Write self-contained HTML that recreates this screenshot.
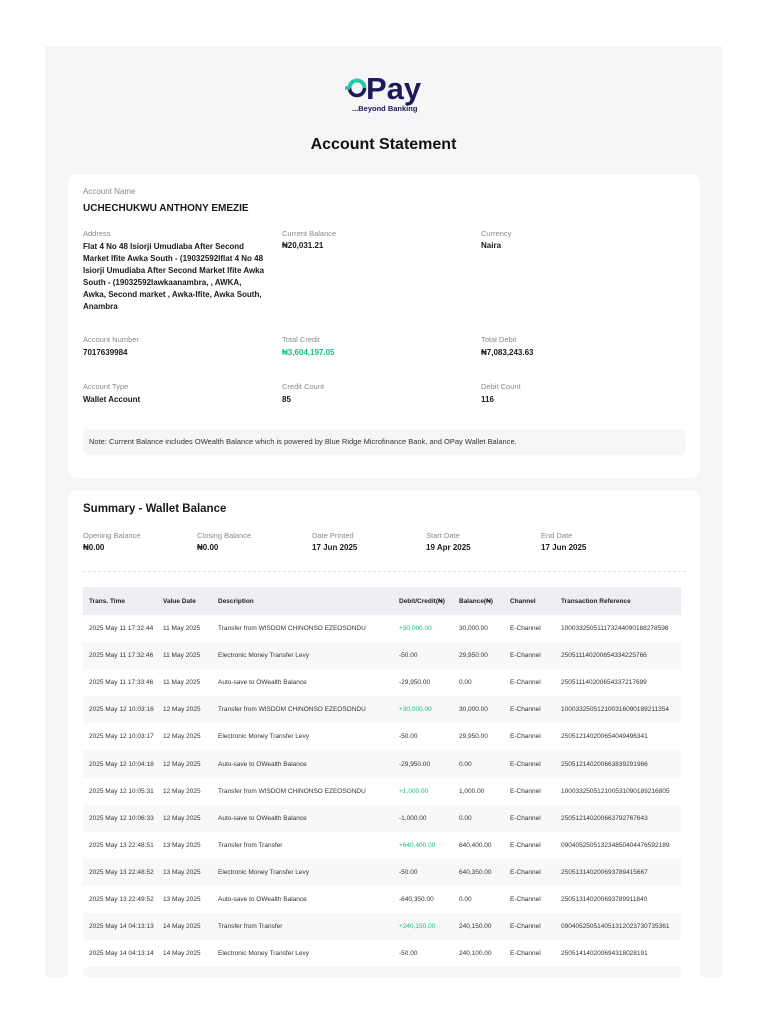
<!DOCTYPE html>
<html><head><meta charset="utf-8"><style>
*{margin:0;padding:0;box-sizing:border-box}
body{width:768px;height:1024px;background:#fff;font-family:"Liberation Sans",sans-serif;color:#1a1a1a;position:relative;overflow:hidden}
.panel{position:absolute;left:45px;top:46px;width:677px;height:931px;background:#f6f6f8;overflow:hidden}
.card{position:absolute;left:23px;width:632px;background:#fff;border-radius:8px}
.a{position:absolute;white-space:nowrap}
.lb{font-size:7.5px;color:#8a8a8a}
.v{font-size:8px;font-weight:bold;color:#1a1a1a}
.g{color:#12c37c}
table{border-collapse:collapse;position:absolute;left:15px;top:96px;width:598px;font-size:6.5px;color:#333}
th{background:#efeff3;height:28px;text-align:left;font-weight:bold;color:#222;padding-left:6px}
td{height:27.1px;padding-left:6px;white-space:nowrap}
tr:nth-child(odd) td{background:#f8f8fa}
tr:nth-child(even) td{background:#fff}
</style></head><body>
<div class="panel">
 <svg class="a" style="left:300px;top:30px" width="30" height="26" viewBox="0 0 30 26">
  <circle cx="12" cy="12" r="7.5" fill="none" stroke="#1d1a5c" stroke-width="3.6"/>
  <path d="M4.5 12 A7.5 7.5 0 0 1 19.5 12" fill="none" stroke="#1dcf9f" stroke-width="3.6"/>
  <rect x="0" y="10.2" width="5" height="3.6" fill="#1dcf9f"/>
 </svg>
 <div class="a" style="left:321px;top:25px;font-size:31px;font-weight:bold;color:#1d1a5c">Pay</div>
 <div class="a" style="left:307px;top:58px;font-size:7.5px;font-weight:bold;color:#1d1a5c">...Beyond Banking</div>
 <div class="a" style="left:0;width:677px;text-align:center;top:90px;font-size:16px;font-weight:bold;color:#111">Account Statement</div>

 <div class="card" style="top:128px;height:304px">
  <div class="a lb" style="left:15px;top:13px;font-size:8px">Account Name</div>
  <div class="a" style="left:15px;top:29px;font-size:10px;font-weight:bold">UCHECHUKWU ANTHONY EMEZIE</div>
  <div class="a lb" style="left:15px;top:55px">Address</div>
  <div class="a v" style="left:15px;top:67px;line-height:12px">Flat 4 No 48 Isiorji Umudiaba After Second<br>Market Ifite Awka South - (19032592Iflat 4 No 48<br>Isiorji Umudiaba After Second Market Ifite Awka<br>South - (19032592Iawkaanambra, , AWKA,<br>Awka, Second market , Awka-Ifite, Awka South,<br>Anambra</div>
  <div class="a lb" style="left:214px;top:55px">Current Balance</div>
  <div class="a v" style="left:214px;top:67px">₦20,031.21</div>
  <div class="a lb" style="left:413px;top:55px">Currency</div>
  <div class="a v" style="left:413px;top:67px">Naira</div>
  <div class="a lb" style="left:15px;top:161px">Account Number</div>
  <div class="a v" style="left:15px;top:174px">7017639984</div>
  <div class="a lb" style="left:214px;top:161px">Total Credit</div>
  <div class="a v g" style="left:214px;top:174px">₦3,604,197.05</div>
  <div class="a lb" style="left:413px;top:161px">Total Debit</div>
  <div class="a v" style="left:413px;top:174px">₦7,083,243.63</div>
  <div class="a lb" style="left:15px;top:208px">Account Type</div>
  <div class="a v" style="left:15px;top:221px">Wallet Account</div>
  <div class="a lb" style="left:214px;top:208px">Credit Count</div>
  <div class="a v" style="left:214px;top:221px">85</div>
  <div class="a lb" style="left:413px;top:208px">Debit Count</div>
  <div class="a v" style="left:413px;top:221px">116</div>
  <div class="a" style="left:15px;top:255px;width:603px;height:26px;background:#f6f6f8;border-radius:6px;font-size:7.5px;color:#333;padding:8px 0 0 6px">Note: Current Balance includes OWealth Balance which is powered by Blue Ridge Microfinance Bank, and OPay Wallet Balance.</div>
 </div>

 <div class="card" style="top:445px;height:500px">
  <div class="a" style="left:15px;top:12px;font-size:11.5px;font-weight:bold">Summary - Wallet Balance</div>
  <div class="a lb" style="left:15px;top:40px">Opening Balance</div><div class="a v" style="left:15px;top:52px">₦0.00</div>
  <div class="a lb" style="left:129px;top:40px">Closing Balance</div><div class="a v" style="left:129px;top:52px">₦0.00</div>
  <div class="a lb" style="left:244px;top:40px">Date Printed</div><div class="a v" style="left:244px;top:52px">17 Jun 2025</div>
  <div class="a lb" style="left:358px;top:40px">Start Date</div><div class="a v" style="left:358px;top:52px">19 Apr 2025</div>
  <div class="a lb" style="left:473px;top:40px">End Date</div><div class="a v" style="left:473px;top:52px">17 Jun 2025</div>
  <div class="a" style="left:15px;top:80px;width:603px;border-top:1px dashed #e2e2e6"></div>
  <table>
   <colgroup><col style="width:74px"><col style="width:55px"><col style="width:181px"><col style="width:60px"><col style="width:51px"><col style="width:51px"><col></colgroup>
   <tr><th>Trans. Time</th><th>Value Date</th><th>Description</th><th>Debit/Credit(₦)</th><th>Balance(₦)</th><th>Channel</th><th>Transaction Reference</th></tr>
   <tr><td>2025 May 11 17:32:44</td><td>11 May 2025</td><td>Transfer from WISDOM CHINONSO EZEOSONDU</td><td class="g">+30,000.00</td><td>30,000.00</td><td>E-Channel</td><td>100033250511173244090188278598</td></tr>
   <tr><td>2025 May 11 17:32:46</td><td>11 May 2025</td><td>Electronic Money Transfer Levy</td><td>-50.00</td><td>29,950.00</td><td>E-Channel</td><td>250511140200654334225766</td></tr>
   <tr><td>2025 May 11 17:33:46</td><td>11 May 2025</td><td>Auto-save to OWealth Balance</td><td>-29,950.00</td><td>0.00</td><td>E-Channel</td><td>250511140200654337217699</td></tr>
   <tr><td>2025 May 12 10:03:16</td><td>12 May 2025</td><td>Transfer from WISDOM CHINONSO EZEOSONDU</td><td class="g">+30,000.00</td><td>30,000.00</td><td>E-Channel</td><td>100033250512100316090189211354</td></tr>
   <tr><td>2025 May 12 10:03:17</td><td>12 May 2025</td><td>Electronic Money Transfer Levy</td><td>-50.00</td><td>29,950.00</td><td>E-Channel</td><td>250512140200654049496341</td></tr>
   <tr><td>2025 May 12 10:04:18</td><td>12 May 2025</td><td>Auto-save to OWealth Balance</td><td>-29,950.00</td><td>0.00</td><td>E-Channel</td><td>250512140200663839291966</td></tr>
   <tr><td>2025 May 12 10:05:31</td><td>12 May 2025</td><td>Transfer from WISDOM CHINONSO EZEOSONDU</td><td class="g">+1,000.00</td><td>1,000.00</td><td>E-Channel</td><td>100033250512100531090189216805</td></tr>
   <tr><td>2025 May 12 10:06:33</td><td>12 May 2025</td><td>Auto-save to OWealth Balance</td><td>-1,000.00</td><td>0.00</td><td>E-Channel</td><td>250512140200663792767643</td></tr>
   <tr><td>2025 May 13 22:48:51</td><td>13 May 2025</td><td>Transfer from Transfer</td><td class="g">+640,400.00</td><td>640,400.00</td><td>E-Channel</td><td>090405250513234850404476592189</td></tr>
   <tr><td>2025 May 13 22:48:52</td><td>13 May 2025</td><td>Electronic Money Transfer Levy</td><td>-50.00</td><td>640,350.00</td><td>E-Channel</td><td>250513140200693789415667</td></tr>
   <tr><td>2025 May 13 22:49:52</td><td>13 May 2025</td><td>Auto-save to OWealth Balance</td><td>-640,350.00</td><td>0.00</td><td>E-Channel</td><td>250513140200693789911840</td></tr>
   <tr><td>2025 May 14 04:13:13</td><td>14 May 2025</td><td>Transfer from Transfer</td><td class="g">+240,150.00</td><td>240,150.00</td><td>E-Channel</td><td>090405250514051312023730735361</td></tr>
   <tr><td>2025 May 14 04:13:14</td><td>14 May 2025</td><td>Electronic Money Transfer Levy</td><td>-50.00</td><td>240,100.00</td><td>E-Channel</td><td>250514140200694318028191</td></tr>
   <tr><td></td><td></td><td></td><td></td><td></td><td></td><td></td></tr>
  </table>
 </div>
</div>
</body></html>
